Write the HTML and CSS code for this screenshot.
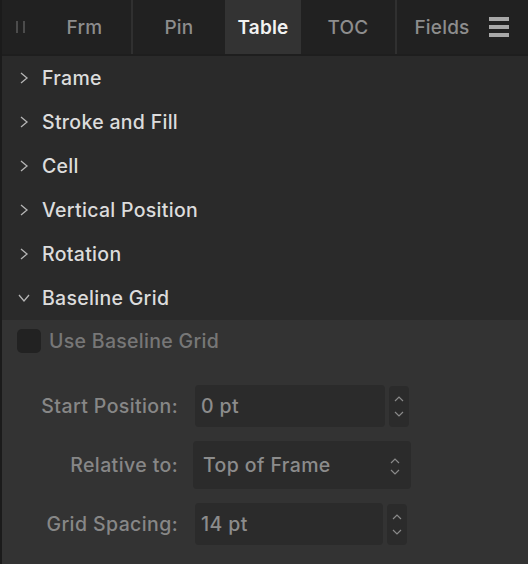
FILE: index.html
```html
<!DOCTYPE html>
<html>
<head>
<meta charset="utf-8">
<link rel="stylesheet" href="styles.css">
</head>
<body>
<div class="panel">
  <div class="tabs">
    <div class="grip"><span></span><span></span></div>
    <div class="tab tab-frm">Frm</div>
    <div class="sep"></div>
    <div class="tab tab-pin">Pin</div>
    <div class="tab tab-table active">Table</div>
    <div class="tab tab-toc">TOC</div>
    <div class="sep"></div>
    <div class="tab tab-fields">Fields</div>
    <div class="menu"><span></span><span></span><span></span></div>
  </div>
  <div class="rule"></div>
  <div class="sections">
    <div class="row"><svg class="chev" viewBox="0 0 10 14"><path d="M2 2 L8 7 L2 12"/></svg><span>Frame</span></div>
    <div class="row"><svg class="chev" viewBox="0 0 10 14"><path d="M2 2 L8 7 L2 12"/></svg><span>Stroke and Fill</span></div>
    <div class="row"><svg class="chev" viewBox="0 0 10 14"><path d="M2 2 L8 7 L2 12"/></svg><span>Cell</span></div>
    <div class="row"><svg class="chev" viewBox="0 0 10 14"><path d="M2 2 L8 7 L2 12"/></svg><span>Vertical Position</span></div>
    <div class="row"><svg class="chev" viewBox="0 0 10 14"><path d="M2 2 L8 7 L2 12"/></svg><span>Rotation</span></div>
    <div class="row"><svg class="chev down" viewBox="0 0 14 10"><path d="M2 2 L7 8 L12 2"/></svg><span>Baseline Grid</span></div>
  </div>
  <div class="expanded">
    <div class="check-row"><div class="checkbox"></div><span>Use Baseline Grid</span></div>
    <div class="form">
      <div class="field-row">
        <div class="label">Start Position:</div>
        <div class="input">0 pt</div>
        <div class="stepper"><svg viewBox="0 0 20 40"><path d="M6 15 L10 11 L14 15"/><path d="M6 26 L10 30 L14 26"/></svg></div>
      </div>
      <div class="field-row select-row">
        <div class="label">Relative to:</div>
        <div class="select"><span>Top of Frame</span><svg viewBox="0 0 20 40"><path d="M6 18 L10 14 L14 18"/><path d="M6 25 L10 29 L14 25"/></svg></div>
      </div>
      <div class="field-row">
        <div class="label">Grid Spacing:</div>
        <div class="input narrow">14 pt</div>
        <div class="stepper"><svg viewBox="0 0 20 40"><path d="M6 15 L10 11 L14 15"/><path d="M6 26 L10 30 L14 26"/></svg></div>
      </div>
    </div>
  </div>
</div>
</body>
</html>
```
FILE: styles.css
```css
* { box-sizing: border-box; }
html, body { margin: 0; padding: 0; background: #333333; }
body { font-family: Inter, "Noto Sans", sans-serif; width: 528px; height: 564px; overflow: hidden; }
.panel { width: 528px; height: 564px; border-left: 2px solid #1b1b1b; display: flex; flex-direction: column; background: #333333; }

.tabs { height: 54px; background: #212121; display: flex; align-items: stretch; position: relative; }
.grip { width: 22px; display: flex; gap: 5px; align-items: center; justify-content: flex-start; padding-left: 14px; box-sizing: content-box; }
.grip span { width: 2px; height: 12px; background: #4c4c4c; }
.tab { display: flex; align-items: center; justify-content: center; font-size: 19px; color: #8d8d8d; font-weight: 500; letter-spacing: 0.2px; }
.tab-frm { width: 93px; }
.sep { width: 2px; background: #303030; }
.tab-pin { width: 92px; }
.tab-table { width: 76px; }
.tab-toc { width: 94px; }
.tab-fields { width: 90px; }
.tab.active { background: #333333; color: #f2f2f2; font-weight: 600; }
.menu { display: flex; flex-direction: column; gap: 4px; justify-content: center; padding-left: 2px; }
.menu span { width: 20px; height: 4px; background: #a8a8a8; }

.rule { height: 2px; background: #1e1e1e; }

.sections { background: #2a2a2a; }
.row { height: 44px; display: flex; align-items: center; padding-left: 17px; color: #dcdcdc; font-size: 19.5px; font-weight: 500; letter-spacing: 0.3px; }
.row span { margin-left: 13px; }
.chev { width: 10px; height: 14px; fill: none; stroke: #b5b5b5; stroke-width: 1.3; }
.chev.down { width: 14px; height: 10px; margin-left: -2px; }
.chev.down + span { margin-left: 11px; }

.expanded { background: #333333; flex: 1; }
.check-row { height: 42px; display: flex; align-items: center; padding-left: 15px; }
.checkbox { width: 24px; height: 24px; border-radius: 5px; background: #222222; }
.check-row span { margin-left: 8px; font-size: 19.5px; color: #777777; font-weight: 500; letter-spacing: 0.3px; }

.form { padding-top: 23px; display: flex; flex-direction: column; gap: 16px; }
.field-row { display: flex; align-items: center; height: 42px; }
.select-row { height: 48px; margin-top: -2px; margin-bottom: -2px; }
.label { width: 176px; text-align: right; font-size: 19.5px; color: #878787; font-weight: 500; letter-spacing: 0.4px; }
.input { margin-left: 17px; width: 190px; height: 42px; border-radius: 4px; background: #2b2b2b; color: #8c8c8c; font-size: 19.5px; display: flex; align-items: center; padding-left: 6px; font-weight: 500; letter-spacing: 0.4px; }
.input.narrow { width: 188px; }
.stepper { margin-left: 4px; width: 20px; height: 41px; border-radius: 4px; background: #2b2b2b; }
.stepper svg, .select svg { width: 20px; height: 40px; fill: none; stroke: #8a8a8a; stroke-width: 1.2; display: block; }
.select { margin-left: 15px; width: 218px; height: 48px; border-radius: 4px; background: #2b2b2b; color: #8c8c8c; font-size: 19.5px; display: flex; align-items: center; justify-content: space-between; padding-left: 10px; padding-right: 6px; font-weight: 500; letter-spacing: 0.4px; }
```
